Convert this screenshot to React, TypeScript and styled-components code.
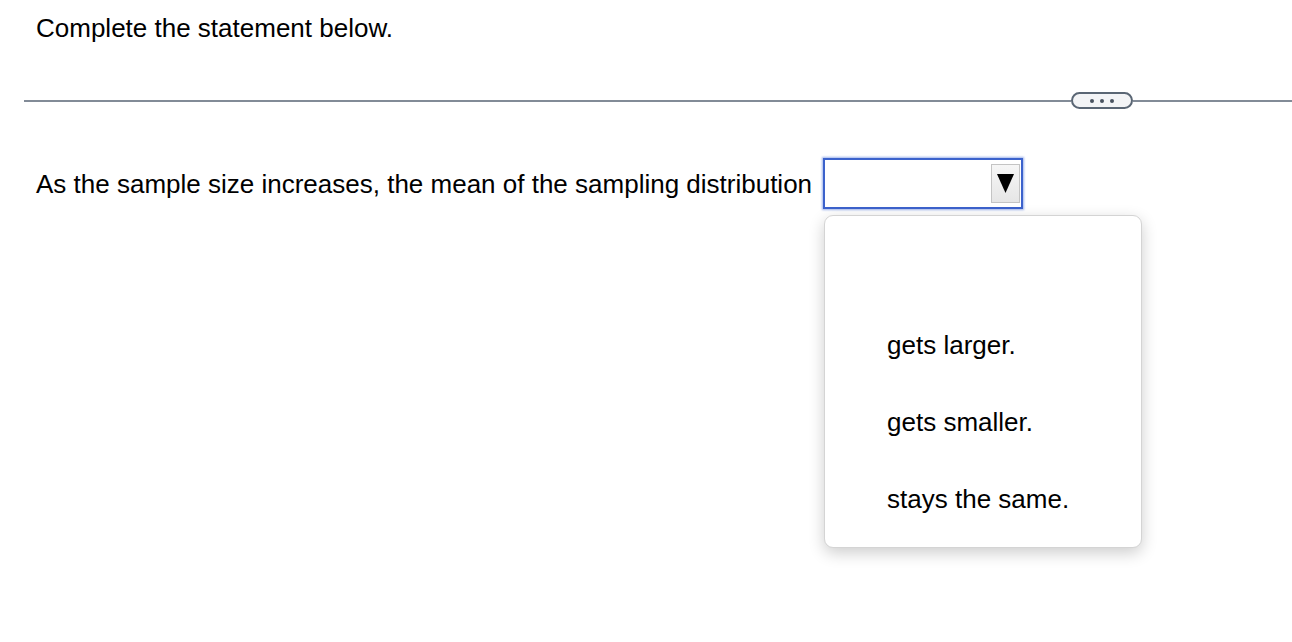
import React from "react";
import styled, { createGlobalStyle } from "styled-components";

const Global = createGlobalStyle`
  html, body { margin: 0; padding: 0; background: #fff; }
  body { font-family: "Liberation Sans", Arial, sans-serif; color: #000; }
`;

const Page = styled.div`
  width: 1292px;
  height: 642px;
  position: relative;
  overflow: hidden;
`;

const Title = styled.div`
  font-size: 26px;
  line-height: 30px;
  padding: 13px 0 0 36px;
`;

const DividerRow = styled.div`
  margin: 49px 0 0 24px;
  height: 17px;
  display: flex;
  align-items: center;
`;

const Line = styled.div<{ $grow?: boolean; $w?: number }>`
  height: 2px;
  background: #828b97;
  ${(p) => (p.$grow ? "flex: 1;" : `width: ${p.$w}px;`)}
`;

const Pill = styled.div`
  width: 58px;
  height: 13px;
  border: 2px solid #5a6674;
  border-radius: 9px;
  background: #f3f4f6;
  display: flex;
  align-items: center;
  justify-content: center;
  gap: 6px;
`;

const Dot = styled.span`
  width: 4px;
  height: 4px;
  border-radius: 50%;
  background: #4a5360;
`;

const Sentence = styled.div`
  margin: 49px 0 0 36px;
  display: flex;
  align-items: center;
  gap: 11px;
  font-size: 26px;
  line-height: 30px;
  position: relative;
`;

const SelectBox = styled.div`
  position: relative;
  width: 195px;
  height: 47px;
  border: 2px solid #3c62cc;
  box-shadow: 0 0 2px 1px #9fb4ec;
  background: #fff;
  display: flex;
  align-items: center;
  justify-content: flex-end;
  padding-right: 1px;
  box-sizing: content-box;
`;

const ArrowButton = styled.div`
  width: 29px;
  height: 39px;
  border: 1px solid #c4c4c4;
  background: linear-gradient(#f6f6f6, #e6e6e6);
  display: flex;
  align-items: center;
  justify-content: center;
  box-sizing: border-box;
`;

const Popup = styled.div`
  position: absolute;
  left: -1px;
  top: 55px;
  width: 318px;
  height: 333px;
  border: 1px solid #d4d4d4;
  border-radius: 9px;
  background: #fff;
  box-shadow: 0 5px 16px rgba(0, 0, 0, 0.2);
  display: flex;
  flex-direction: column;
  padding: 114px 0 0 62px;
  box-sizing: border-box;
  gap: 47px;
`;

const Option = styled.div`
  font-size: 26px;
  line-height: 30px;
  white-space: nowrap;
`;

export default function App() {
  return (
    <Page>
      <Global />
      <Title>Complete the statement below.</Title>
      <DividerRow>
        <Line $w={1047} />
        <Pill>
          <Dot />
          <Dot />
          <Dot />
        </Pill>
        <Line $grow />
      </DividerRow>
      <Sentence>
        <span>As the sample size increases, the mean of the sampling distribution</span>
        <SelectBox>
          <ArrowButton>
            <svg width="17" height="19" viewBox="0 0 17 19">
              <polygon points="0,0 17,0 8.5,19" fill="#000" />
            </svg>
          </ArrowButton>
          <Popup>
            <Option>gets larger.</Option>
            <Option>gets smaller.</Option>
            <Option>stays the same.</Option>
          </Popup>
        </SelectBox>
      </Sentence>
    </Page>
  );
}
